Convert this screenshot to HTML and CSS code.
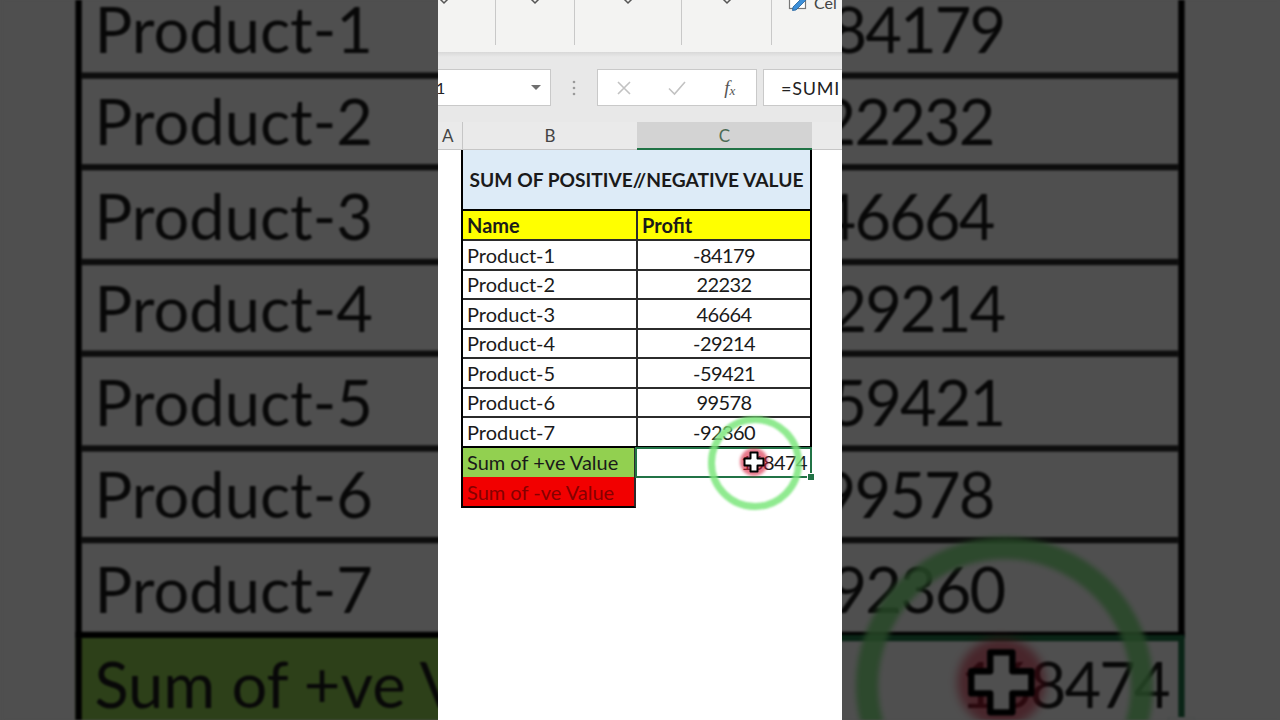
FILE: index.html
```html
<!DOCTYPE html>
<html lang="en">
<head>
<meta charset="utf-8">
<title>Sum of positive / negative value</title>
<link rel="stylesheet" href="styles.css">
</head>
<body>
<div class="stage">
  <div class="backdrop" aria-hidden="true">
    <div class="sheet">
      <div class="ribbon">
        <div class="grp g1"><svg class="chev" width="10" height="6" viewBox="0 0 10 6"><polyline points="1,0 5,4 9,0" fill="none" stroke="#555" stroke-width="1.5"/></svg></div>
        <div class="grp g2"><svg class="chev" width="10" height="6" viewBox="0 0 10 6"><polyline points="1,0 5,4 9,0" fill="none" stroke="#555" stroke-width="1.5"/></svg></div>
        <div class="grp g3"><svg class="chev" width="10" height="6" viewBox="0 0 10 6"><polyline points="1,0 5,4 9,0" fill="none" stroke="#555" stroke-width="1.5"/></svg></div>
        <div class="grp g4"><svg class="chev" width="10" height="6" viewBox="0 0 10 6"><polyline points="1,0 5,4 9,0" fill="none" stroke="#555" stroke-width="1.5"/></svg></div>
        <div class="g5"></div>
      </div>
      <div class="fbar"></div>
      <div class="colhead">
        <div class="ch cha"></div><div class="ch chb"></div><div class="ch chc"></div><div class="ch chd"></div>
      </div>
      <div class="body">
        <div class="tbl">
          <div class="title"></div>
          <div class="row head"><div class="b"></div><div class="c left"></div></div>
          <div class="row"><div class="b">Product-1</div><div class="c num">-84179</div></div>
          <div class="row"><div class="b">Product-2</div><div class="c num">22232</div></div>
          <div class="row"><div class="b">Product-3</div><div class="c num">46664</div></div>
          <div class="row"><div class="b">Product-4</div><div class="c num">-29214</div></div>
          <div class="row"><div class="b">Product-5</div><div class="c num">-59421</div></div>
          <div class="row"><div class="b">Product-6</div><div class="c num">99578</div></div>
          <div class="row last"><div class="b">Product-7</div><div class="c num">-92360</div></div>
        </div>
        <div class="sum pos"><div class="b">Sum of +ve Value</div><div class="c sel num">168474<span class="handle"></span></div></div>
        <div class="sum neg"><div class="b">Sum of -ve Value</div></div>
      </div>
      <div class="ring"></div>
      <div class="dot"></div>
      <svg class="cur" width="22" height="22" viewBox="0 0 22 22"><path d="M7.5 1.5H14.5V7.5H20.5V14.5H14.5V20.5H7.5V14.5H1.5V7.5H7.5Z" fill="#fff" stroke="#000" stroke-width="2" stroke-linejoin="round"/></svg>
    </div>
  </div>

  <div class="front">
    <div class="sheet">
      <div class="ribbon">
        <div class="grp g1"><svg class="chev" width="10" height="6" viewBox="0 0 10 6"><polyline points="1,0 5,4 9,0" fill="none" stroke="#555" stroke-width="1.5"/></svg></div>
        <div class="grp g2"><svg class="chev" width="10" height="6" viewBox="0 0 10 6"><polyline points="1,0 5,4 9,0" fill="none" stroke="#555" stroke-width="1.5"/></svg></div>
        <div class="grp g3"><svg class="chev" width="10" height="6" viewBox="0 0 10 6"><polyline points="1,0 5,4 9,0" fill="none" stroke="#555" stroke-width="1.5"/></svg></div>
        <div class="grp g4"><svg class="chev" width="10" height="6" viewBox="0 0 10 6"><polyline points="1,0 5,4 9,0" fill="none" stroke="#555" stroke-width="1.5"/></svg></div>
        <div class="g5">
          <svg class="celicon" width="22" height="16" viewBox="0 0 22 16"><rect x="1.5" y="1.5" width="16" height="12" fill="#fff" stroke="#777" stroke-width="1.2"/><path d="M5 12 L15 2 L18 5 L8 15 L4.5 15.5 Z" fill="#3d8fd8" stroke="#1f5f9c" stroke-width="0.8"/></svg>
          <span class="celtxt">Cel</span>
        </div>
      </div>
      <div class="fbar">
        <div class="namebox"><span class="nm">1</span><span class="dd"></span></div>
        <div class="grip"><svg width="4" height="16" viewBox="0 0 4 16"><circle cx="2" cy="2" r="1.3" fill="#9a9a9a"/><circle cx="2" cy="8" r="1.3" fill="#9a9a9a"/><circle cx="2" cy="14" r="1.3" fill="#9a9a9a"/></svg></div>
        <div class="fbtns">
          <div class="fbtn"><svg width="16" height="16" viewBox="0 0 16 16"><path d="M2 2L14 14M14 2L2 14" stroke="#c2c2c2" stroke-width="1.6"/></svg></div>
          <div class="fbtn"><svg width="20" height="16" viewBox="0 0 20 16"><path d="M2 8.5L7.5 14L18 2" fill="none" stroke="#c2c2c2" stroke-width="1.6"/></svg></div>
          <div class="fbtn"><span class="fx">f<sub>x</sub></span></div>
        </div>
        <div class="finput">=SUMI</div>
      </div>
      <div class="colhead">
        <div class="ch cha">A</div><div class="ch chb">B</div><div class="ch chc">C</div><div class="ch chd"></div>
      </div>
      <div class="body">
        <div class="tbl">
          <div class="title">SUM OF POSITIVE//NEGATIVE VALUE</div>
          <div class="row head"><div class="b">Name</div><div class="c left">Profit</div></div>
          <div class="row"><div class="b">Product-1</div><div class="c num">-84179</div></div>
          <div class="row"><div class="b">Product-2</div><div class="c num">22232</div></div>
          <div class="row"><div class="b">Product-3</div><div class="c num">46664</div></div>
          <div class="row"><div class="b">Product-4</div><div class="c num">-29214</div></div>
          <div class="row"><div class="b">Product-5</div><div class="c num">-59421</div></div>
          <div class="row"><div class="b">Product-6</div><div class="c num">99578</div></div>
          <div class="row last"><div class="b">Product-7</div><div class="c num">-92360</div></div>
        </div>
        <div class="sum pos"><div class="b">Sum of +ve Value</div><div class="c sel num">168474<span class="handle"></span></div></div>
        <div class="sum neg"><div class="b">Sum of -ve Value</div></div>
      </div>
      <div class="ring"></div>
      <div class="dot"></div>
      <svg class="cur" width="22" height="22" viewBox="0 0 22 22"><path d="M7.5 1.5H14.5V7.5H20.5V14.5H14.5V20.5H7.5V14.5H1.5V7.5H7.5Z" fill="#fff" stroke="#000" stroke-width="2" stroke-linejoin="round"/></svg>
    </div>
  </div>
</div>
</body>
</html>
```

FILE: styles.css
```css
html, body {
  margin: 0;
  padding: 0;
  background: #4f4f4f;
}

.stage {
  width: 1280px;
  height: 720px;
  display: grid;
  overflow: hidden;
}

.stage > .backdrop,
.stage > .front {
  grid-area: 1 / 1;
}

.backdrop {
  display: flex;
  justify-content: center;
  overflow: hidden;
  filter: brightness(0.31) blur(1px);
}

.backdrop .sheet {
  flex: none;
  transform: scale(3.16);
  transform-origin: 201.5px 360px;
}

.front {
  justify-self: center;
  width: 404px;
  height: 720px;
}

/* ---------- sheet ---------- */
.sheet {
  position: relative;
  width: 404px;
  height: 720px;
  background: #fff;
  display: flex;
  flex-direction: column;
  overflow: hidden;
  font-family: Lato, "Liberation Sans", sans-serif;
  color: #1a1a1a;
}

.ribbon {
  flex: none;
  height: 52px;
  margin-left: -46px;
  background: #f3f3f2;
  display: flex;
}

.grp {
  flex: none;
  height: 45px;
  border-right: 1.5px solid #c8c8c8;
  display: flex;
  justify-content: center;
}

.g1 { width: 103px; }
.g2 { width: 78px; }
.g3 { width: 106px; }
.g4 { width: 89px; }

.chev {
  display: block;
  margin-top: -1px;
}

.g5 {
  flex: 1;
  display: flex;
  align-items: flex-start;
  padding-left: 16px;
  white-space: nowrap;
  overflow: hidden;
}

.celicon {
  display: block;
  margin-top: -5px;
  flex: none;
}

.celtxt {
  margin-top: -5px;
  margin-left: 4px;
  font-size: 16px;
  line-height: 16px;
  color: #444;
}

.fbar {
  flex: none;
  height: 70px;
  box-sizing: border-box;
  padding-top: 17px;
  display: flex;
  align-items: flex-start;
  background: linear-gradient(#d8d8d8, #e8e8e8 5px);
}

.namebox {
  flex: none;
  width: 113px;
  height: 37px;
  box-sizing: border-box;
  background: #fff;
  border: 1px solid #c9c9c9;
  border-left: 0;
  display: flex;
  align-items: center;
  font-size: 16px;
  color: #222;
}

.nm {
  margin-left: -2px;
}

.dd {
  margin-left: auto;
  margin-right: 9px;
  width: 0;
  height: 0;
  border-left: 5px solid transparent;
  border-right: 5px solid transparent;
  border-top: 5px solid #6f6f6f;
}

.grip {
  flex: none;
  width: 46px;
  display: flex;
  justify-content: center;
  padding-top: 11px;
}

.grip svg { display: block; }

.fbtns {
  flex: none;
  width: 160px;
  height: 37px;
  box-sizing: border-box;
  background: #fff;
  border: 1px solid #c9c9c9;
  display: flex;
}

.fbtn {
  width: 53px;
  display: flex;
  align-items: center;
  justify-content: center;
}

.fbtn svg { display: block; }

.fx {
  font-family: "Liberation Serif", serif;
  font-style: italic;
  font-size: 19px;
  color: #555;
  line-height: 1;
}

.fx sub {
  font-size: 13px;
  vertical-align: -1px;
}

.finput {
  flex: 1;
  min-width: 0;
  margin-left: 6px;
  height: 37px;
  box-sizing: border-box;
  background: #fff;
  border: 1px solid #c9c9c9;
  border-right: 0;
  padding-left: 17px;
  display: flex;
  align-items: center;
  font-size: 18px;
  letter-spacing: 0.8px;
  color: #222;
  white-space: nowrap;
  overflow: hidden;
}

.colhead {
  flex: none;
  height: 28px;
  display: flex;
  background: #eaeaea;
  font-size: 17px;
  color: #444;
}

.ch {
  box-sizing: border-box;
  height: 28px;
  border-bottom: 1px solid #c6c6c6;
  display: flex;
  align-items: center;
  justify-content: center;
}

.cha {
  width: 25px;
  border-right: 1px solid #c6c6c6;
  justify-content: flex-start;
  padding-left: 4px;
}

.chb { width: 174px; }

.chc {
  width: 175px;
  background: #d3d3d3;
  border-bottom: 2px solid #217346;
  color: #4c6b55;
}

.chd { flex: 1; }

/* ---------- table ---------- */
.body {
  flex: 1;
  padding-left: 23px;
  font-size: 20px;
}

.tbl {
  width: 351px;
  box-sizing: border-box;
  border-left: 2px solid #000;
  border-right: 2px solid #000;
  border-bottom: 2px solid #000;
}

.title {
  height: 61px;
  box-sizing: border-box;
  background: #ddebf7;
  border-bottom: 2px solid #000;
  display: flex;
  align-items: center;
  justify-content: center;
  font-weight: 700;
  font-size: 19.2px;
  white-space: nowrap;
}

.row {
  display: flex;
  height: 29.5px;
  box-sizing: border-box;
  border-bottom: 2px solid #2b2b2b;
}

.row.last {
  height: 27.5px;
  border-bottom: 0;
}

.row.head {
  height: 30px;
  background: #ffff00;
  font-weight: 700;
}

.b {
  flex: none;
  width: 175px;
  box-sizing: border-box;
  border-right: 2px solid #2b2b2b;
  padding-left: 4px;
  display: flex;
  align-items: center;
  white-space: nowrap;
}

.c {
  flex: 1;
  display: flex;
  align-items: center;
  justify-content: center;
  white-space: nowrap;
}

.num {
  letter-spacing: -0.6px;
}

.c.left {
  justify-content: flex-start;
  padding-left: 4px;
}

.sum {
  display: flex;
  width: 351px;
  height: 29.5px;
}

.sum .b {
  border-left: 2px solid #000;
}

.pos .b {
  background: #92d050;
}

.sel {
  position: relative;
  flex: none;
  width: 177px;
  height: 31px;
  margin-top: -1px;
  margin-left: -1px;
  box-sizing: border-box;
  border: 2px solid #217346;
  justify-content: flex-end;
  padding-right: 3px;
}

.handle {
  position: absolute;
  right: -5px;
  bottom: -5px;
  width: 6px;
  height: 6px;
  background: #217346;
  border: 1px solid #fff;
}

.neg {
  height: 31px;
}

.neg .b {
  background: #f20000;
  border-bottom: 2px solid #000;
  color: #850000;
}

/* ---------- pointer highlight ---------- */
.ring {
  position: absolute;
  left: 270px;
  top: 416px;
  width: 94px;
  height: 94px;
  box-sizing: border-box;
  border-radius: 50%;
  border: 7px solid rgba(125, 230, 125, 0.85);
  filter: blur(0.8px);
}

.dot {
  position: absolute;
  left: 302px;
  top: 448px;
  width: 28px;
  height: 28px;
  border-radius: 50%;
  background: rgba(215, 30, 60, 0.6);
  filter: blur(1.5px);
}

.cur {
  position: absolute;
  left: 305px;
  top: 451px;
  display: block;
}
```
